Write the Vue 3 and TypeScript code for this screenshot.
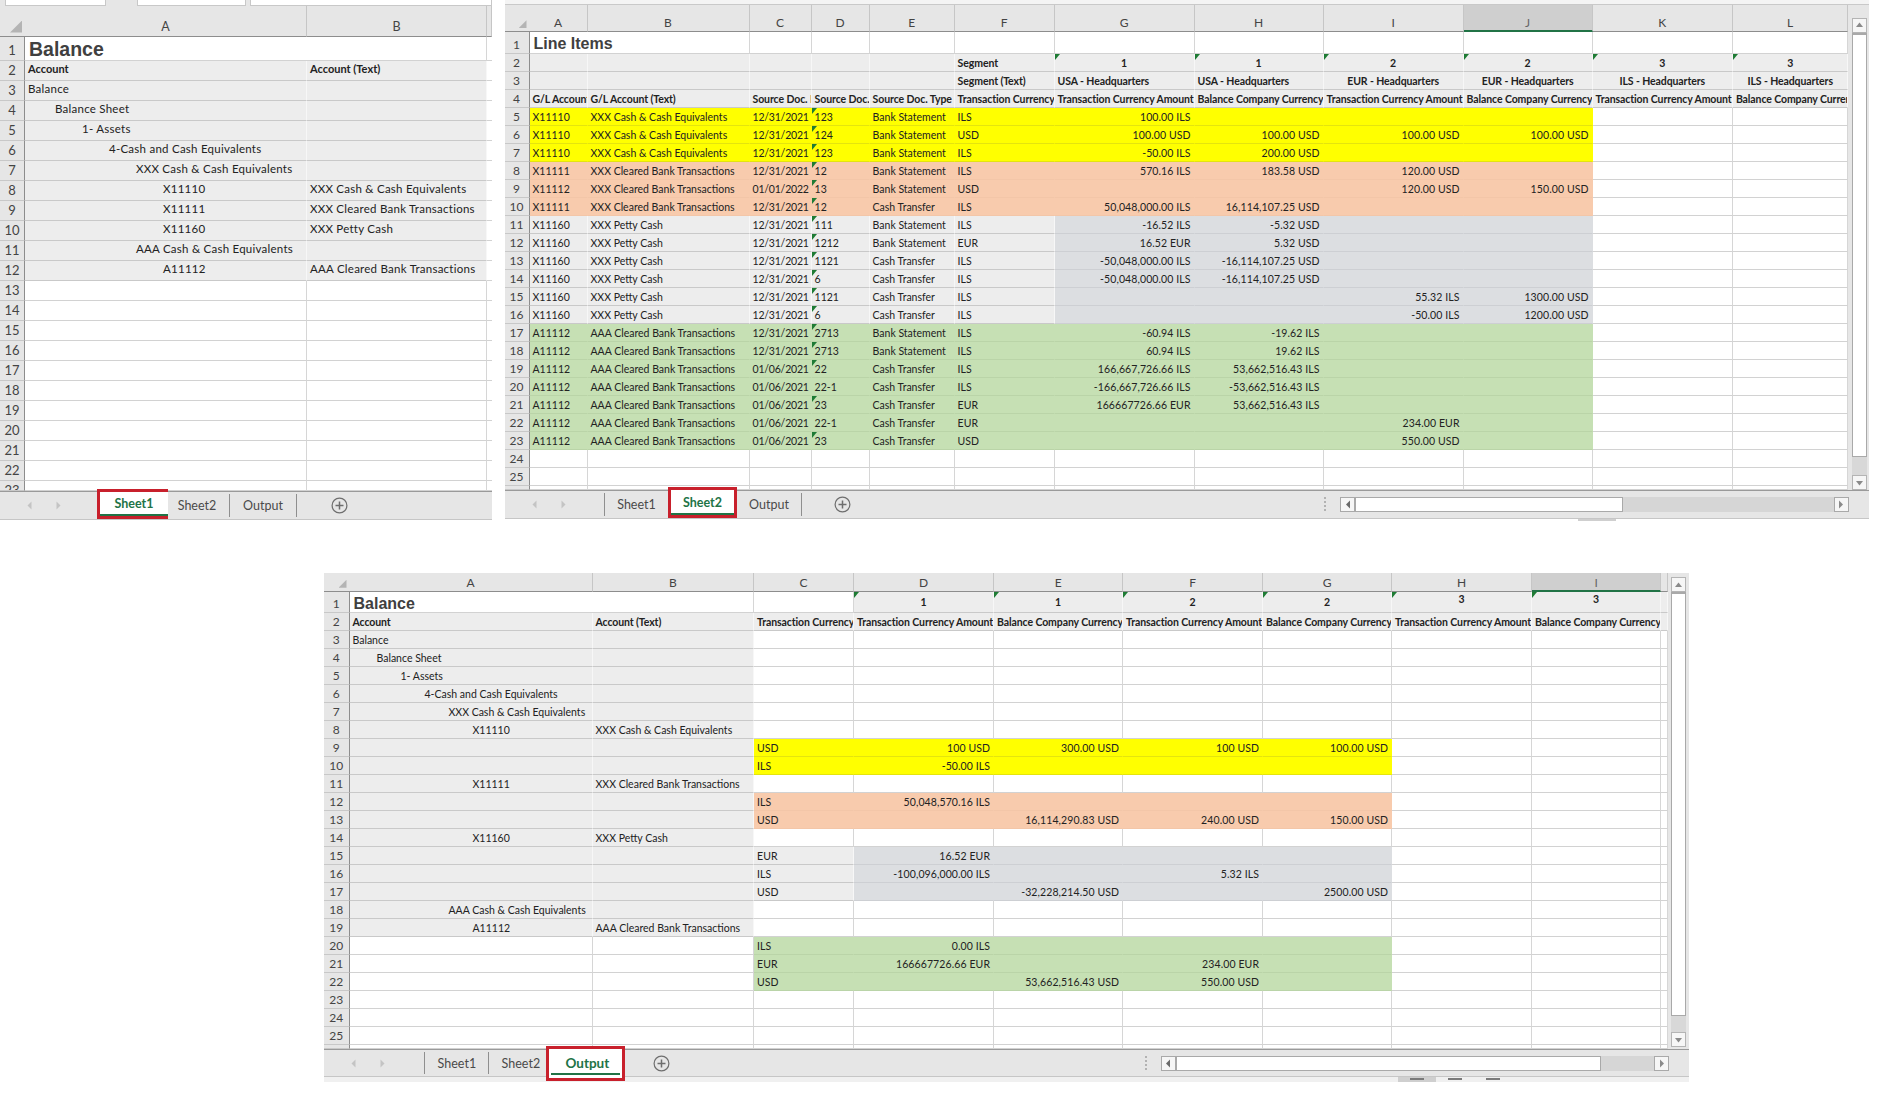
<script setup lang="ts">
type Fill = 'w' | 'e' | 'y' | 'o' | 'g' | 'n'
interface Cell { t?: string; r?: boolean; c?: boolean; b?: boolean; fill: Fill; flag?: boolean; indent?: number; span?: number; title?: boolean; up?: boolean; tight?: boolean }
interface Row { num: string; h: number; cells: Cell[] }
interface Col { name: string; w: number; sel?: boolean }
interface Tab { name: string; w: number; active?: boolean }
interface Win {
  id: string; head: number; cornerW: number; cols: Col[]; rows: Row[]; tabs: Tab[]
  vbar: boolean; thumbV?: number; thumbH?: number; marks?: number
}

const C = (t: string, fill: Fill = 'e', o: Partial<Cell> = {}): Cell => ({ t, fill, ...o })
const blank = (n: number, fill: Fill = 'w'): Cell[] => Array.from({ length: n }, () => ({ fill }))

/* ---------- Sheet1 ---------- */
const s1Data: [string, number, string][] = [
  ['Balance', 0, ''], ['Balance Sheet', 1, ''], ['1- Assets', 2, ''], ['4-Cash and Cash Equivalents', 3, ''],
  ['XXX Cash & Cash Equivalents', 4, ''], ['X11110', 5, 'XXX Cash & Cash Equivalents'],
  ['X11111', 5, 'XXX Cleared Bank Transactions'], ['X11160', 5, 'XXX Petty Cash'],
  ['AAA Cash & Cash Equivalents', 4, ''], ['A11112', 5, 'AAA Cleared Bank Transactions']
]
const s1Rows: Row[] = [
  { num: '1', h: 24, cells: [C('Balance', 'w', { title: true, span: 2 }), ...blank(1)] },
  { num: '2', h: 20, cells: [C('Account', 'e', { b: true }), C('Account (Text)', 'e', { b: true }), ...blank(1)] },
  ...s1Data.map(([a, i, b], k): Row => ({
    num: String(k + 3), h: 20, cells: [C(a, 'e', { indent: i * 27 }), C(b), ...blank(1)]
  })),
  ...Array.from({ length: 10 }, (_, k): Row => ({ num: String(k + 13), h: 20, cells: blank(3) })),
  { num: '23', h: 10.4, cells: blank(3) }
]

/* ---------- Sheet2 ---------- */
const num = (t: string, fill: Fill): Cell => C(t, fill, { r: true })
function s2Line(
  n: number, f: Fill, f2: Fill, a: string, b: string, date: string, doc: string, flag: boolean,
  type: string, cur: string, g = '', h = '', i = '', j = ''
): Row {
  return {
    num: String(n), h: 18,
    cells: [
      C(a, f), C(b, f), C(date, f, { tight: true }), C(doc, f, { flag }), C(type, f), C(cur, f),
      num(g, f2), num(h, f2), num(i, f2), num(j, f2), ...blank(2)
    ]
  }
}
const XC = 'XXX Cash & Cash Equivalents'
const XB = 'XXX Cleared Bank Transactions'
const XP = 'XXX Petty Cash'
const AB = 'AAA Cleared Bank Transactions'
const BS = 'Bank Statement'
const CT = 'Cash Transfer'
const D1 = '12/31/2021'
const D2 = '01/06/2021'
const segs = ['1', '1', '2', '2', '3', '3']
const segText = ['USA - Headquarters', 'USA - Headquarters', 'EUR - Headquarters', 'EUR - Headquarters', 'ILS - Headquarters', 'ILS - Headquarters']
const amounts = ['Transaction Currency Amount', 'Balance Company Currency']
const amountHeads = [...amounts, ...amounts, ...amounts]

const s2Rows: Row[] = [
  { num: '1', h: 22, cells: [C('Line Items', 'w', { title: true, span: 2 }), ...blank(10)] },
  { num: '2', h: 18, cells: [...blank(5, 'e'), C('Segment', 'e', { b: true }), ...segs.map(t => C(t, 'e', { b: true, c: true, flag: true }))] },
  { num: '3', h: 18, cells: [...blank(5, 'e'), C('Segment (Text)', 'e', { b: true }), ...segText.map((t, i) => C(t, 'e', { b: true, c: i > 1 }))] },
  {
    num: '4', h: 18,
    cells: [
      ...['G/L Account', 'G/L Account (Text)', 'Source Doc. ID', 'Source Doc. ID', 'Source Doc. Type', 'Transaction Currency', ...amountHeads]
        .map(t => C(t, 'e', { b: true }))
    ]
  },
  s2Line(5, 'y', 'y', 'X11110', XC, D1, '123', true, BS, 'ILS', '100.00 ILS'),
  s2Line(6, 'y', 'y', 'X11110', XC, D1, '124', true, BS, 'USD', '100.00 USD', '100.00 USD', '100.00 USD', '100.00 USD'),
  s2Line(7, 'y', 'y', 'X11110', XC, D1, '123', true, BS, 'ILS', '-50.00 ILS', '200.00 USD'),
  s2Line(8, 'o', 'o', 'X11111', XB, D1, '12', true, BS, 'ILS', '570.16 ILS', '183.58 USD', '120.00 USD'),
  s2Line(9, 'o', 'o', 'X11112', XB, '01/01/2022', '13', true, BS, 'USD', '', '', '120.00 USD', '150.00 USD'),
  s2Line(10, 'o', 'o', 'X11111', XB, D1, '12', true, CT, 'ILS', '50,048,000.00 ILS', '16,114,107.25 USD'),
  s2Line(11, 'e', 'g', 'X11160', XP, D1, '111', true, BS, 'ILS', '-16.52 ILS', '-5.32 USD'),
  s2Line(12, 'e', 'g', 'X11160', XP, D1, '1212', true, BS, 'EUR', '16.52 EUR', '5.32 USD'),
  s2Line(13, 'e', 'g', 'X11160', XP, D1, '1121', true, CT, 'ILS', '-50,048,000.00 ILS', '-16,114,107.25 USD'),
  s2Line(14, 'e', 'g', 'X11160', XP, D1, '6', true, CT, 'ILS', '-50,048,000.00 ILS', '-16,114,107.25 USD'),
  s2Line(15, 'e', 'g', 'X11160', XP, D1, '1121', true, CT, 'ILS', '', '', '55.32 ILS', '1300.00 USD'),
  s2Line(16, 'e', 'g', 'X11160', XP, D1, '6', true, CT, 'ILS', '', '', '-50.00 ILS', '1200.00 USD'),
  s2Line(17, 'n', 'n', 'A11112', AB, D1, '2713', true, BS, 'ILS', '-60.94 ILS', '-19.62 ILS'),
  s2Line(18, 'n', 'n', 'A11112', AB, D1, '2713', true, BS, 'ILS', '60.94 ILS', '19.62 ILS'),
  s2Line(19, 'n', 'n', 'A11112', AB, D2, '22', true, CT, 'ILS', '166,667,726.66 ILS', '53,662,516.43 ILS'),
  s2Line(20, 'n', 'n', 'A11112', AB, D2, '22-1', false, CT, 'ILS', '-166,667,726.66 ILS', '-53,662,516.43 ILS'),
  s2Line(21, 'n', 'n', 'A11112', AB, D2, '23', true, CT, 'EUR', '166667726.66 EUR', '53,662,516.43 ILS'),
  s2Line(22, 'n', 'n', 'A11112', AB, D2, '22-1', false, CT, 'EUR', '', '', '234.00 EUR'),
  s2Line(23, 'n', 'n', 'A11112', AB, D2, '23', true, CT, 'USD', '', '', '550.00 USD'),
  { num: '24', h: 18, cells: blank(12) },
  { num: '25', h: 18, cells: blank(12) },
  { num: '', h: 4, cells: blank(12) }
]

/* ---------- Output ---------- */
function s3Line(
  n: number, a: string, indent: number, b: string, cf: Fill, df: Fill,
  c = '', d = '', e = '', f = '', g = ''
): Row {
  return {
    num: String(n), h: 18,
    cells: [
      C(a, 'e', { indent }), C(b), C(c, cf), num(d, df), num(e, df), num(f, df), num(g, df), ...blank(3)
    ]
  }
}
const s3Rows: Row[] = [
  {
    num: '1', h: 21.6,
    cells: [
      C('Balance', 'w', { title: true, span: 2 }), ...blank(1),
      ...segs.map((t, i) => C(t, 'e', { b: true, c: true, flag: true, up: i > 3 })), ...blank(1, 'e')
    ]
  },
  {
    num: '2', h: 18,
    cells: [
      ...['Account', 'Account (Text)', 'Transaction Currency', ...amountHeads].map(t => C(t, 'e', { b: true })),
      ...blank(1, 'e')
    ]
  },
  s3Line(3, 'Balance', 0, '', 'w', 'w'),
  s3Line(4, 'Balance Sheet', 24, '', 'w', 'w'),
  s3Line(5, '1- Assets', 48, '', 'w', 'w'),
  s3Line(6, '4-Cash and Cash Equivalents', 72, '', 'w', 'w'),
  s3Line(7, XC, 96, '', 'w', 'w'),
  s3Line(8, 'X11110', 120, XC, 'w', 'w'),
  s3Line(9, '', 0, '', 'y', 'y', 'USD', '100 USD', '300.00 USD', '100 USD', '100.00 USD'),
  s3Line(10, '', 0, '', 'y', 'y', 'ILS', '-50.00 ILS'),
  s3Line(11, 'X11111', 120, XB, 'w', 'w'),
  s3Line(12, '', 0, '', 'o', 'o', 'ILS', '50,048,570.16 ILS'),
  s3Line(13, '', 0, '', 'o', 'o', 'USD', '', '16,114,290.83 USD', '240.00 USD', '150.00 USD'),
  s3Line(14, 'X11160', 120, XP, 'w', 'w'),
  s3Line(15, '', 0, '', 'e', 'g', 'EUR', '16.52 EUR'),
  s3Line(16, '', 0, '', 'e', 'g', 'ILS', '-100,096,000.00 ILS', '', '5.32 ILS'),
  s3Line(17, '', 0, '', 'e', 'g', 'USD', '', '-32,228,214.50 USD', '', '2500.00 USD'),
  s3Line(18, 'AAA Cash & Cash Equivalents', 96, '', 'w', 'w'),
  s3Line(19, 'A11112', 120, AB, 'w', 'w'),
  ...[
    ['ILS', '0.00 ILS', '', ''],
    ['EUR', '166667726.66 EUR', '', '234.00 EUR'],
    ['USD', '', '53,662,516.43 USD', '550.00 USD']
  ].map(([c, d, e, f], k): Row => ({
    num: String(k + 20), h: 18,
    cells: [...blank(2), C(c, 'n'), num(d, 'n'), num(e, 'n'), num(f, 'n'), num('', 'n'), ...blank(3)]
  })),
  ...[23, 24, 25].map((n): Row => ({ num: String(n), h: 18, cells: blank(10) })),
  { num: '', h: 4, cells: blank(10) }
]

const letters = (names: string, widths: number[], sel = ''): Col[] =>
  names.split('').map((name, i) => ({ name, w: widths[i], sel: name === sel }))

const wins: Win[] = [
  {
    id: 's1', head: 25, cornerW: 12, vbar: false,
    cols: [...letters('AB', [282, 180]), { name: '', w: 5 }],
    rows: s1Rows,
    tabs: [{ name: 'Sheet1', w: 71, active: true }, { name: 'Sheet2', w: 62 }, { name: 'Output', w: 67 }]
  },
  {
    id: 's2', head: 25, cornerW: 8, vbar: true, thumbV: 424, thumbH: 268, marks: 1,
    cols: letters('ABCDEFGHIJKL', [58, 162, 62.1, 58, 85, 100, 140, 129, 140, 129, 140.3, 115.6], 'J'),
    rows: s2Rows,
    tabs: [{ name: 'Sheet1', w: 64 }, { name: 'Sheet2', w: 69, active: true }, { name: 'Output', w: 65 }]
  },
  {
    id: 's3', head: 25.5, cornerW: 8, vbar: true, thumbV: 424, thumbH: 425, marks: 3,
    cols: [...letters('ABCDEFGHI', [243, 161.6, 100, 140, 129, 140, 129, 140, 129], 'I'), { name: '', w: 7.2 }],
    rows: s3Rows,
    tabs: [{ name: 'Sheet1', w: 65 }, { name: 'Sheet2', w: 57 }, { name: 'Output', w: 79, active: true }]
  }
]

const headH: Record<string, number> = { s1: 30.6, s2: 27, s3: 19 }
const gridStyle = (w: Win) => ({
  gridTemplateColumns: `${w.head}px ${w.cols.map(c => c.w + 'px').join(' ')}`,
  gridTemplateRows: `${headH[w.id]}px ${w.rows.map(r => r.h + 'px').join(' ')}`
})
const cellClass = (c: Cell) => [
  'cell', `f-${c.fill}`,
  { right: c.r, center: c.c, bold: c.b, flag: c.flag, title: c.title, up: c.up, tight: c.tight }
]
const cellStyle = (c: Cell) => ({
  gridColumn: c.span ? `span ${c.span}` : undefined,
  paddingLeft: c.indent ? `${c.indent + 3}px` : undefined
})
</script>

<template>
  <main class="page">
    <section v-for="w in wins" :key="w.id" class="win" :class="w.id">
      <div class="strip">
        <template v-if="w.id === 's1'">
          <span class="input in-a"></span><span class="input in-b"></span><span class="input in-c"></span>
        </template>
      </div>

      <div class="body">
        <div class="grid" :style="gridStyle(w)">
          <div class="corner"><i :style="{ width: w.cornerW + 'px', height: w.cornerW + 'px' }"></i></div>
          <div v-for="(col, ci) in w.cols" :key="ci" class="colhead" :class="{ sel: col.sel }">{{ col.name }}</div>
          <template v-for="row in w.rows" :key="row.num">
            <div class="rowhead" :class="{ clip: row.h < 12 }">{{ row.num }}</div>
            <div v-for="(cell, ci) in row.cells" :key="ci" :class="cellClass(cell)" :style="cellStyle(cell)">{{ cell.t }}</div>
          </template>
        </div>
        <div v-if="w.vbar" class="vbar">
          <span class="vbtn"><svg width="9" height="6" viewBox="0 0 9 6"><polygon points="4.5,0.5 8,5 1,5" fill="#8a8a8a" /></svg></span>
          <span class="vthumb" :style="{ height: w.thumbV + 'px' }"></span>
          <span class="vtrack"></span>
          <span class="vbtn"><svg width="9" height="6" viewBox="0 0 9 6"><polygon points="4.5,5.5 8,1 1,1" fill="#8a8a8a" /></svg></span>
        </div>
      </div>

      <div class="tabbar">
        <div class="nav">
          <svg width="5" height="9" viewBox="0 0 5 9"><polygon points="4.5,0.5 4.5,8.5 0.5,4.5" fill="#c4c4c4" /></svg>
          <svg width="5" height="9" viewBox="0 0 5 9"><polygon points="0.5,0.5 0.5,8.5 4.5,4.5" fill="#c4c4c4" /></svg>
        </div>
        <div class="tabs">
          <div v-for="t in w.tabs" :key="t.name" class="tab" :class="{ active: t.active }" :style="{ width: t.w + 'px' }">
            <span class="tabtext">{{ t.name }}</span>
          </div>
        </div>
        <svg class="plus" width="17" height="17" viewBox="0 0 17 17">
          <circle cx="8.5" cy="8.5" r="7.4" fill="none" stroke="#6e6e6e" stroke-width="1.2" />
          <path d="M8.5 4.5v8M4.5 8.5h8" stroke="#6e6e6e" stroke-width="1.5" fill="none" />
        </svg>
        <template v-if="w.vbar">
          <span class="spacer"></span>
          <span class="dots"></span>
          <div class="hbar">
            <span class="hbtn"><svg width="6" height="9" viewBox="0 0 6 9"><polygon points="5,0.5 5,8.5 1,4.5" fill="#6a6a6a" /></svg></span>
            <span class="hthumb" :style="{ width: w.thumbH + 'px' }"></span>
            <span class="htrack"></span>
            <span class="hbtn"><svg width="6" height="9" viewBox="0 0 6 9"><polygon points="1,0.5 1,8.5 5,4.5" fill="#8a8a8a" /></svg></span>
          </div>
        </template>
      </div>

      <div v-if="w.marks" class="status">
        <span v-for="m in w.marks" :key="m" class="viewbtn" :class="{ on: m === 1 }"><i v-if="w.marks > 1"></i></span>
      </div>
    </section>
  </main>
</template>

<style scoped>
.page {
  width: 1887px;
  height: 1102px;
  background: #fff;
  display: flex;
  flex-wrap: wrap;
  align-content: flex-start;
  overflow: hidden;
  font-family: Lato, "Liberation Sans", sans-serif;
  color: #222;
}
.win {
  display: flex;
  flex-direction: column;
  flex: none;
}
.s1 { width: 492px; margin-right: 12.5px; }
.s2 { width: 1364.5px; }
.s3 { width: 1364.6px; margin: 51.5px 0 0 324px; }

.strip { display: flex; background: #e6e6e6; flex: none; }
.s1 .strip { height: 6px; }
.s2 .strip { height: 5.3px; background: #f4f4f4; border-bottom: 1px solid #c9c9c9; box-sizing: border-box; }
.s3 .strip { height: 0; }
.input { height: 6px; background: #fff; border-right: 1px solid #c8c8c8; border-left: 1px solid #c8c8c8; border-bottom: 1px solid #c8c8c8; box-sizing: border-box; }
.in-a { width: 101px; margin-left: 5px; }
.in-b { width: 109px; margin-left: 31px; }
.in-c { width: 242px; margin-left: 4px; }

.body { display: flex; background: #e6e6e6; flex: none; }
.grid { display: grid; flex: none; overflow: hidden; }
.s2 .grid, .s3 .grid { border-right: 0; box-shadow: inset -1px 0 0 #9c9c9c; }

.corner { background: #e6e6e6; display: flex; align-items: flex-end; justify-content: flex-end; padding: 0 3px 3px 0; border-bottom: 1px solid #8d8d8d; box-sizing: border-box; }
.corner i { display: block; clip-path: polygon(100% 0, 100% 100%, 0 100%); background: #b4b4b4; }

.colhead {
  background: #e6e6e6;
  border-right: 1px solid #c6c6c6;
  border-bottom: 1px solid #8d8d8d;
  box-sizing: border-box;
  display: flex;
  align-items: center;
  justify-content: center;
  font-size: 12px;
  color: #444;
}
.s1 .colhead { padding-top: 12px; font-size: 12.5px; }
.s2 .colhead { padding-top: 9px; }
.s3 .colhead { padding-top: 2px; }
.colhead.sel { background: #cfcfcf; border-bottom: 2px solid #217346; color: #666; }

.rowhead {
  background: #e6e6e6;
  border-right: 1px solid #8d8d8d;
  border-bottom: 1px solid #c8c8c8;
  box-sizing: border-box;
  display: flex;
  align-items: flex-end;
  justify-content: center;
  font-size: 12px;
  line-height: 16px;
  color: #444;
  overflow: hidden;
}
.s1 .rowhead { font-size: 13px; line-height: 18px; padding-bottom: 1px; }
.rowhead.clip { align-items: flex-start; padding-bottom: 0; }

.cell {
  box-sizing: border-box;
  display: flex;
  align-items: center;
  min-width: 0;
  overflow: hidden;
  white-space: nowrap;
  padding: 0 3px;
  font-size: 10.5px;
  border-right: 1px solid #d6d6d6;
  border-bottom: 1px solid #d2d2d2;
  position: relative;
}
.s1 .cell { font-size: 11.5px; letter-spacing: 0.25px; padding-bottom: 3px; }
.right { justify-content: flex-end; letter-spacing: 0.1px; }
.center { justify-content: center; }
.bold { font-weight: 700; letter-spacing: -0.1px; }
.tight { letter-spacing: -0.2px; }
.s1 .cell.bold { font-size: 11px; letter-spacing: 0; }
.up { padding-bottom: 6px; }
.cell.title {
  font-family: "Liberation Sans", Arial, sans-serif;
  font-weight: 700;
  font-size: 16px;
  letter-spacing: 0;
  color: #404040;
  padding: 3px 0 0 4px;
}
.s1 .cell.title { font-size: 19.5px; letter-spacing: 0; padding: 3px 0 0 4px; }
.flag::before {
  content: "";
  position: absolute;
  left: 0;
  top: 0;
  border-top: 6px solid #1e7b34;
  border-right: 5px solid transparent;
}
.f-w { background: #fff; }
.f-e { background: #ededed; border-right-color: #f7f7f7; border-bottom-color: #c9c9c9; }
.f-y { background: #ffff00; border-right-color: #ffff00; border-bottom-color: #e4e40e; }
.f-o { background: #f8cbad; border-right-color: #f8cbad; border-bottom-color: #f3c6a8; }
.f-g { background: #dcdee1; border-right-color: #dcdee1; border-bottom-color: #cdcfd3; }
.f-n { background: #c6e0b4; border-right-color: #c6e0b4; border-bottom-color: #bad4a8; }

.vbar { display: flex; flex-direction: column; width: 15px; flex: none; }
.s2 .vbar { margin: 12.7px 2px 0 3.5px; }
.s3 .vbar { margin: 4.3px 1.6px 2px 3px; }
.vbtn { height: 15px; flex: none; background: #f6f6f6; border: 1px solid #b4b4b4; box-sizing: border-box; display: flex; align-items: center; justify-content: center; }
.vthumb { flex: none; background: #fff; border: 1px solid #a9a9a9; border-top-width: 2px; box-sizing: border-box; }
.vtrack { flex: 1; background: #d8d8d8; }

.tabbar {
  display: flex;
  align-items: center;
  background: #e6e6e6;
  border-top: 1px solid #9a9a9a;
  border-bottom: 1px solid #c6c6c6;
  box-sizing: border-box;
  flex: none;
}
.s1 .tabbar { height: 29px; }
.s2 .tabbar { height: 28.4px; padding-right: 20.5px; }
.s3 .tabbar { height: 28px; padding-right: 19.6px; }

.nav { display: flex; align-items: center; gap: 24px; padding-left: 27px; flex: none; box-sizing: border-box; width: 99.5px; }
.s1 .nav { width: 97px; }
.s3 .nav { width: 100.4px; }
.tabs { display: flex; align-self: stretch; flex: none; }
.tab {
  display: flex;
  align-items: center;
  justify-content: center;
  box-sizing: border-box;
  flex: none;
  font-size: 12.5px;
  color: #4a4a4a;
  border-right: 1px solid #8f8f8f;
  margin: 2px 0;
}
.s1 .tab:nth-child(2) { padding-right: 3px; }
.s3 .tab:nth-child(2) { padding-left: 6px; }
.s2 .tab:first-child, .s3 .tab:first-child { border-left: 1px solid #8f8f8f; }
.s3 .tab:nth-child(2), .s2 .tab:first-child, .s1 .tab:first-child { border-right: 0; }
.tab.active {
  position: relative;
  z-index: 2;
  align-self: flex-start;
  margin: 0;
  background: #fff;
  border: 3px solid #c8202c;
  color: #217346;
  font-weight: 700;
}
.tab.active::after {
  content: "";
  position: absolute;
  left: 0;
  right: 0;
  bottom: 0;
  height: 2px;
  background: #217346;
}
.s1 .tab.active { margin-top: -3px; height: 30px; }
.s2 .tab.active { margin-top: -4.3px; height: 31px; }
.s3 .tab.active { margin-top: -4.3px; height: 34.7px; font-size: 13.5px; padding-left: 3px; }
.s3 .tab.active::after { bottom: 3px; left: 2px; right: 2px; }
.tabtext { display: block; }

.plus { flex: none; margin-left: 34px; }
.s2 .plus { margin-left: 32px; }
.s3 .plus { margin-left: 28px; }
.spacer { flex: 1; }
.dots { width: 0; height: 14px; border-left: 2px dotted #b2b2b2; margin-right: 14px; flex: none; }
.hbar { display: flex; height: 15px; width: 508.5px; flex: none; }
.hbtn { width: 15px; flex: none; background: #f6f6f6; border: 1px solid #a9a9a9; box-sizing: border-box; display: flex; align-items: center; justify-content: center; }
.hthumb { flex: none; background: #fff; border: 1px solid #a9a9a9; box-sizing: border-box; }
.htrack { flex: 1; background: #d6d6d6; }

.status { display: flex; justify-content: flex-end; flex: none; box-sizing: border-box; }
.s2 .status { height: 2.6px; padding-right: 253px; }
.s3 .status { height: 4.4px; padding-right: 176.6px; background: #f0f0f0; }
.viewbtn { width: 38px; display: flex; justify-content: center; }
.viewbtn.on { background: #cfcfcf; }
.viewbtn i { display: block; width: 14px; height: 2px; background: #7a7a7a; margin-top: 1px; }
</style>
